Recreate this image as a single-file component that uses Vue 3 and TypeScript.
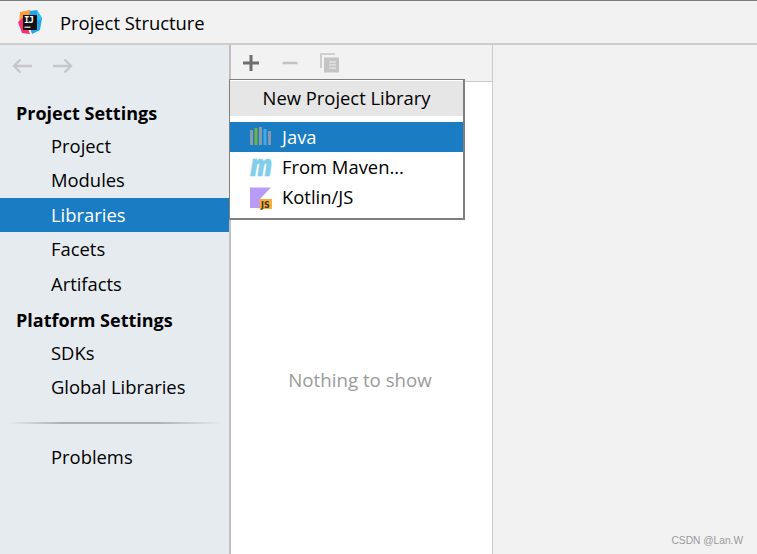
<script setup lang="ts">
interface NavItem { label: string; kind: 'head' | 'item'; active?: boolean }
const top: NavItem[] = [
  { label: 'Project Settings', kind: 'head' },
  { label: 'Project', kind: 'item' },
  { label: 'Modules', kind: 'item' },
  { label: 'Libraries', kind: 'item', active: true },
  { label: 'Facets', kind: 'item' },
  { label: 'Artifacts', kind: 'item' },
  { label: 'Platform Settings', kind: 'head' },
  { label: 'SDKs', kind: 'item' },
  { label: 'Global Libraries', kind: 'item' },
]
</script>

<template>
  <div class="window">
    <header class="titlebar">
      <svg class="logo" width="26" height="26" viewBox="0 0 26 26">
        <path d="M3 3 L13 1 L17 8 L8 20 L2 16 Z" fill="#fd9a3c" />
        <path d="M1 13 L7 8 L13 25 L5 24 Z" fill="#fb2e74" />
        <path d="M13 2 L20 1 L25 9 L23 21 L15 25 L11 12 Z" fill="#1fa5ee" />
        <path d="M19 1 L25 9 L21 12 Z" fill="#29c6f2" />
        <rect x="6" y="6" width="14" height="15" fill="#111" />
        <text x="7" y="14" class="logo-text">IJ</text>
        <rect x="7.5" y="17.6" width="6" height="1.2" fill="#eee" />
      </svg>
      <span class="title">Project Structure</span>
    </header>
    <div class="body">
      <aside class="sidebar">
        <div class="nav-arrows">
          <svg width="22" height="16" viewBox="0 0 22 16"><path d="M20 8 H2 M8.5 1.5 L2 8 L8.5 14.5" fill="none" stroke="#c6c7c9" stroke-width="2.4" /></svg>
          <svg width="22" height="16" viewBox="0 0 22 16"><path d="M1 8 H19 M12.5 1.5 L19 8 L12.5 14.5" fill="none" stroke="#c6c7c9" stroke-width="2.4" /></svg>
        </div>
        <ul class="nav">
          <li v-for="n in top" :key="n.label" :class="[n.kind, { active: n.active }]">{{ n.label }}</li>
        </ul>
        <div class="rule"></div>
        <ul class="nav">
          <li class="item">Problems</li>
        </ul>
      </aside>
      <section class="middle">
        <div class="toolbar">
          <svg width="18" height="18" viewBox="0 0 18 18"><path d="M9 1 V17 M1 9 H17" stroke="#6e6e6e" stroke-width="3" fill="none" /></svg>
          <svg width="18" height="18" viewBox="0 0 18 18"><path d="M1.5 9 H16.5" stroke="#c4c4c4" stroke-width="2.6" fill="none" /></svg>
          <svg width="20" height="20" viewBox="0 0 20 20">
            <path d="M1 15 V1 H15 M1 1 H14" fill="none" stroke="#c4c4c4" stroke-width="1.6" />
            <rect x="4" y="4.5" width="15" height="15" fill="#c4c4c4" />
            <path d="M9 9 H16 M9 12 H16 M9 15 H16" stroke="#f2f2f2" stroke-width="1.2" />
          </svg>
        </div>
        <div class="empty">Nothing to show</div>
        <div class="popup">
          <div class="popup-head">New Project Library</div>
          <ul class="popup-list">
            <li class="selected">
              <svg width="22" height="22" viewBox="0 0 22 22">
                <rect x="0" y="4" width="3" height="15" fill="#8b98a5" />
                <rect x="4.5" y="2" width="3" height="17" fill="#6cb33f" />
                <rect x="9" y="1" width="3" height="18" fill="#8b98a5" />
                <rect x="13.5" y="3" width="3" height="16" fill="#41a9e6" />
                <rect x="18" y="5" width="3" height="14" fill="#8b98a5" />
              </svg>
              <span>Java</span>
            </li>
            <li>
              <svg width="22" height="22" viewBox="0 0 22 22">
                <text x="0" y="20" transform="scale(0.8 1)" class="m-glyph">m</text>
              </svg>
              <span>From Maven...</span>
            </li>
            <li>
              <svg width="22" height="22" viewBox="0 0 22 22">
                <path d="M0 1.5 H21 L10 13 V22 H0 Z" fill="#b99bf8" />
                <rect x="9.5" y="13" width="12.5" height="10" fill="#f4af3d" />
                <text x="11" y="21.6" class="js-glyph">JS</text>
              </svg>
              <span>Kotlin/JS</span>
            </li>
          </ul>
        </div>
      </section>
      <section class="right">
        <span class="watermark">CSDN @Lan.W</span>
      </section>
    </div>
  </div>
</template>

<style>
html, body { margin: 0; padding: 0; }
</style>

<style scoped>
.window {
  width: 757px;
  height: 554px;
  overflow: hidden;
  display: flex;
  flex-direction: column;
  background: #f2f2f2;
  color: #000;
  font-family: "Open Sans", "Noto Sans", sans-serif;
  box-sizing: border-box;
  border-top: 1px solid #7c7c7c;
}
.titlebar {
  height: 42px;
  flex: none;
  display: flex;
  align-items: center;
  padding-left: 17px;
  gap: 17px;
  border-bottom: 2px solid #cdcdcd;
  box-sizing: content-box;
}
.logo { flex: none; overflow: visible; }
.logo-text { font: bold 9px "DejaVu Sans Mono", monospace; fill: #fff; letter-spacing: -1px; }
.title { font-size: 18.4px; }
.body {
  flex: 1;
  display: grid;
  grid-template-columns: 231px 262px 1fr;
  min-height: 0;
}
.sidebar {
  background: #e6ebf0;
  border-right: 2px solid #bfc0c1;
  box-sizing: border-box;
}
.nav-arrows {
  display: flex;
  gap: 18px;
  padding: 13px 0 0 12px;
  height: 42px;
  box-sizing: border-box;
  margin-bottom: 7px;
}
.nav { list-style: none; margin: 0; padding: 0; }
.nav li {
  height: 34.5px;
  line-height: 34px;
  font-size: 18.4px;
  white-space: nowrap;
}
.nav .head { font-weight: 700; padding-left: 16px; font-size: 18px; line-height: 38px; }
.nav .item { padding-left: 51px; }
.nav .active { background: #1a7dc4; color: #fff; }
.rule {
  height: 2px;
  margin: 17px 7px 16px 8px;
  background: linear-gradient(90deg, #e6ebf0, #b0b0b0 25%, #b0b0b0 70%, #e6ebf0);
}
.middle {
  position: relative;
  background: #fff;
  border-right: 1px solid #c9c9c9;
  display: flex;
  flex-direction: column;
  box-sizing: border-box;
}
.toolbar {
  height: 37px;
  flex: none;
  box-sizing: border-box;
  background: #f2f2f2;
  border-bottom: 1px solid #c9c9c9;
  display: flex;
  align-items: center;
  padding: 0 0 1px 11px;
  gap: 21px;
}
.empty {
  flex: 1;
  display: flex;
  align-items: center;
  justify-content: center;
  color: #9b9b9b;
  font-size: 18.7px;
  padding-top: 122px;
  padding-right: 3px;
}
.popup {
  position: absolute;
  left: -2px;
  top: 34px;
  width: 236px;
  height: 141px;
  box-sizing: border-box;
  background: #fff;
  border: 1px solid #7f7f7f;
  border-right-width: 2px;
  border-bottom-width: 2px;
}
.popup-head {
  margin-top: 1px;
  height: 35px;
  line-height: 33px;
  background: #e6e6e6;
  text-align: center;
  font-size: 18.4px;
}
.popup-list { list-style: none; margin: 6px 0 0; padding: 0; }
.popup-list li {
  height: 30px;
  display: flex;
  align-items: center;
  gap: 10px;
  padding-left: 20px;
  font-size: 18.4px;
}
.popup-list li span { margin-top: -2px; }
.popup-list li svg { flex: none; overflow: visible; }
.popup-list .selected { background: #1a7dc4; color: #fff; }
.m-glyph { font: italic 800 30px "Open Sans", sans-serif; fill: #7fcfec; stroke: #7fcfec; stroke-width: 0.5px; }
.js-glyph { font: bold 8px "DejaVu Sans", sans-serif; fill: #4a3414; }
.right {
  position: relative;
  background: #f2f2f2;
}
.watermark {
  position: absolute;
  right: 14px;
  bottom: 8px;
  font: 10.2px "Liberation Sans", Arial, sans-serif;
  color: #9a9a9a;
}
</style>
